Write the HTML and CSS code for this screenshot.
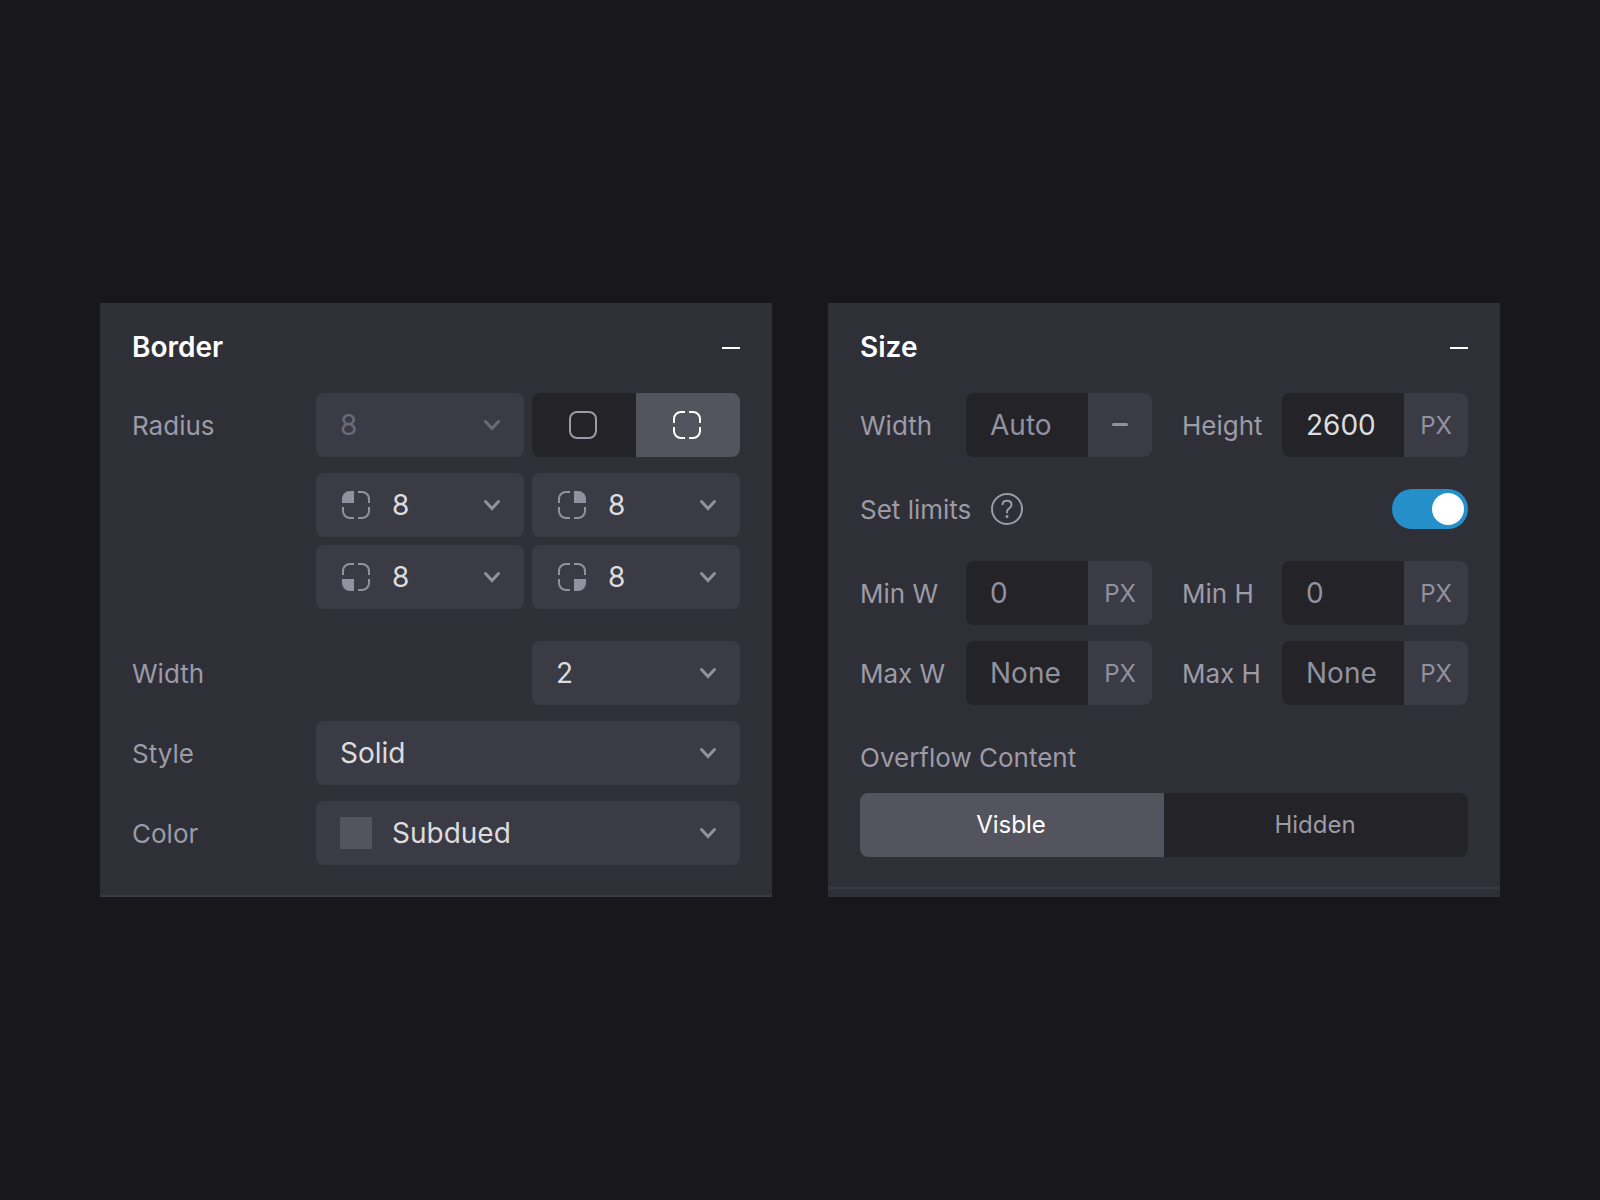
FILE: index.html
```html
<!DOCTYPE html>
<html lang="en">
<head>
    <meta charset="UTF-8">
    <meta name="viewport" content="width=device-width, initial-scale=1.0">
    <title>Border and Size</title>
    <link rel="stylesheet" href="styles.css">
</head>
<body>
    <!-- Shared icon shapes -->
    <svg class="icon-defs" aria-hidden="true">
        <symbol id="chevron" viewBox="0 0 16 16">
            <path d="M1.5 4.5L8 11.5L14.5 4.5" fill="none" stroke="currentColor" stroke-width="3" stroke-linecap="round"/>
        </symbol>
        <symbol id="corner-line" viewBox="0 0 12 12">
            <path d="M1 12V8A7 7 0 0 1 8 1H12" fill="none" stroke="currentColor" stroke-width="2"/>
        </symbol>
        <symbol id="corner-fill" viewBox="0 0 12 12">
            <path d="M0 12V8A8 8 0 0 1 8 0H12V12Z" fill="currentColor"/>
        </symbol>
        <symbol id="collapse" viewBox="0 0 18 18">
            <path d="M0 9H18" stroke="currentColor" stroke-width="2"/>
        </symbol>
    </svg>

    <main class="panels">
        <section class="panel">
            <div class="section">
                <header class="section-header">
                    <h2>Border</h2>
                    <button type="button" class="collapse" aria-label="Collapse Border"><svg><use href="#collapse"/></svg></button>
                </header>

                <div class="border-grid">
                    <label for="radius">Radius</label>
                    <div class="select disabled">
                        <select id="radius" disabled><option>8</option></select>
                        <svg class="chevron"><use href="#chevron"/></svg>
                    </div>
                    <div class="segmented">
                        <button type="button" aria-label="Same radius" aria-pressed="false">
                            <svg width="28" height="28" viewBox="0 0 28 28"><rect x="1" y="1" width="26" height="26" rx="7" fill="none" stroke="currentColor" stroke-width="2"/></svg>
                        </button>
                        <button type="button" class="active" aria-label="Individual radius" aria-pressed="true">
                            <svg width="28" height="28" viewBox="0 0 28 28">
                                <use href="#corner-line" width="12" height="12"/>
                                <use href="#corner-line" width="12" height="12" transform="translate(28 0) rotate(90)"/>
                                <use href="#corner-line" width="12" height="12" transform="translate(28 28) rotate(180)"/>
                                <use href="#corner-line" width="12" height="12" transform="translate(0 28) rotate(270)"/>
                            </svg>
                        </button>
                    </div>

                    <div class="corners">
                        <div class="select has-icon">
                            <svg class="corner-icon" viewBox="0 0 28 28">
                                <use href="#corner-fill" width="12" height="12"/>
                                <use href="#corner-line" width="12" height="12" transform="translate(28 0) rotate(90)"/>
                                <use href="#corner-line" width="12" height="12" transform="translate(28 28) rotate(180)"/>
                                <use href="#corner-line" width="12" height="12" transform="translate(0 28) rotate(270)"/>
                            </svg>
                            <select aria-label="Top left radius"><option>8</option></select>
                            <svg class="chevron"><use href="#chevron"/></svg>
                        </div>
                        <div class="select has-icon">
                            <svg class="corner-icon" viewBox="0 0 28 28">
                                <use href="#corner-line" width="12" height="12"/>
                                <use href="#corner-fill" width="12" height="12" transform="translate(28 0) rotate(90)"/>
                                <use href="#corner-line" width="12" height="12" transform="translate(28 28) rotate(180)"/>
                                <use href="#corner-line" width="12" height="12" transform="translate(0 28) rotate(270)"/>
                            </svg>
                            <select aria-label="Top right radius"><option>8</option></select>
                            <svg class="chevron"><use href="#chevron"/></svg>
                        </div>
                        <div class="select has-icon">
                            <svg class="corner-icon" viewBox="0 0 28 28">
                                <use href="#corner-line" width="12" height="12"/>
                                <use href="#corner-line" width="12" height="12" transform="translate(28 0) rotate(90)"/>
                                <use href="#corner-line" width="12" height="12" transform="translate(28 28) rotate(180)"/>
                                <use href="#corner-fill" width="12" height="12" transform="translate(0 28) rotate(270)"/>
                            </svg>
                            <select aria-label="Bottom left radius"><option>8</option></select>
                            <svg class="chevron"><use href="#chevron"/></svg>
                        </div>
                        <div class="select has-icon">
                            <svg class="corner-icon" viewBox="0 0 28 28">
                                <use href="#corner-line" width="12" height="12"/>
                                <use href="#corner-line" width="12" height="12" transform="translate(28 0) rotate(90)"/>
                                <use href="#corner-fill" width="12" height="12" transform="translate(28 28) rotate(180)"/>
                                <use href="#corner-line" width="12" height="12" transform="translate(0 28) rotate(270)"/>
                            </svg>
                            <select aria-label="Bottom right radius"><option>8</option></select>
                            <svg class="chevron"><use href="#chevron"/></svg>
                        </div>
                    </div>

                    <label for="border-width">Width</label>
                    <div class="select last-column">
                        <select id="border-width"><option>2</option></select>
                        <svg class="chevron"><use href="#chevron"/></svg>
                    </div>

                    <label for="border-style">Style</label>
                    <div class="select wide">
                        <select id="border-style"><option>Solid</option></select>
                        <svg class="chevron"><use href="#chevron"/></svg>
                    </div>

                    <label for="border-color">Color</label>
                    <div class="select wide has-icon">
                        <span class="swatch"></span>
                        <select id="border-color"><option>Subdued</option></select>
                        <svg class="chevron"><use href="#chevron"/></svg>
                    </div>
                </div>
            </div>
        </section>

        <section class="panel">
            <div class="section">
                <header class="section-header">
                    <h2>Size</h2>
                    <button type="button" class="collapse" aria-label="Collapse Size"><svg><use href="#collapse"/></svg></button>
                </header>

                <div class="size-grid">
                    <label for="width">Width</label>
                    <div class="field">
                        <input type="text" id="width" placeholder="Auto">
                        <button type="button" aria-label="No unit">
                            <svg width="16" height="4" viewBox="0 0 16 4"><path d="M1.5 1.5H14.5" stroke="currentColor" stroke-width="3" stroke-linecap="round"/></svg>
                        </button>
                    </div>
                    <label for="height">Height</label>
                    <div class="field">
                        <input type="text" id="height" value="2600">
                        <button type="button">PX</button>
                    </div>
                </div>

                <div class="limits">
                    <label for="limits">Set limits</label>
                    <button type="button" class="help" aria-label="About limits">
                        <svg width="32" height="32" viewBox="0 0 32 32" fill="none" stroke="currentColor" stroke-width="2">
                            <circle cx="16" cy="16" r="15"/>
                            <path d="M11.5 12C11.5 9.3 13.3 7.7 16 7.7C18.7 7.7 20.5 9.3 20.5 11.7C20.5 13.5 19.6 14.5 18.2 15.4C16.7 16.4 16 17.2 16 18.9V20.2"/>
                            <circle cx="16" cy="23.5" r="1.5" fill="currentColor" stroke="none"/>
                        </svg>
                    </button>
                    <input type="checkbox" id="limits" class="toggle" role="switch" checked>
                </div>

                <div class="size-grid">
                    <label for="min-w">Min W</label>
                    <div class="field">
                        <input type="text" id="min-w" placeholder="0">
                        <button type="button">PX</button>
                    </div>
                    <label for="min-h">Min H</label>
                    <div class="field">
                        <input type="text" id="min-h" placeholder="0">
                        <button type="button">PX</button>
                    </div>
                    <label for="max-w">Max W</label>
                    <div class="field">
                        <input type="text" id="max-w" placeholder="None">
                        <button type="button">PX</button>
                    </div>
                    <label for="max-h">Max H</label>
                    <div class="field">
                        <input type="text" id="max-h" placeholder="None">
                        <button type="button">PX</button>
                    </div>
                </div>

                <p class="overflow-label" id="overflow-label">Overflow Content</p>
                <div class="segmented" role="group" aria-labelledby="overflow-label">
                    <button type="button" class="active" aria-pressed="true">Visble</button>
                    <button type="button" aria-pressed="false">Hidden</button>
                </div>
            </div>
        </section>
    </main>
</body>
</html>
```
FILE: styles.css
```css
* {
    box-sizing: border-box;
}

body {
    margin: 0;
    min-height: 100vh;
    display: flex;
    align-items: center;
    background: #18171b;
    color: #9c9ba6;
    font-family: Inter, sans-serif;
    font-size: 26px;
}

button, input, select {
    margin: 0;
    padding: 0;
    border: none;
    background: none;
    color: inherit;
    font-family: inherit;
}

button, select {
    cursor: pointer;
}

svg {
    display: block;
}

.icon-defs {
    position: absolute;
    width: 0;
    height: 0;
}

.panels {
    flex: 1;
    display: grid;
    grid-template-columns: 1fr 1fr;
    gap: 56px;
    padding: 0 100px;
}

.panel {
    background: #2f2f38;
}

.section {
    padding: 0 32px 30px;
    border-bottom: 2px solid #3b3b45;
}

.section-header {
    display: flex;
    justify-content: space-between;
    align-items: center;
    height: 90px;
    color: #fff;
}

h2 {
    margin: 0;
    padding-bottom: 2px;
    font-size: 28px;
    font-weight: 600;
}

.collapse svg {
    width: 18px;
    height: 18px;
}

/* Border */
.border-grid {
    display: grid;
    grid-template-columns: 176px 1fr 1fr;
    gap: 16px 8px;
    align-items: center;
}

.corners {
    grid-column: 2 / 4;
    display: grid;
    grid-template-columns: 1fr 1fr;
    gap: 8px;
    margin-bottom: 16px;
}

.last-column {
    grid-column: 3;
}

.wide {
    grid-column: 2 / 4;
}

.select {
    position: relative;
}

.select select {
    display: block;
    width: 100%;
    height: 64px;
    padding: 0 48px 0 24px;
    border-radius: 8px;
    background: #3b3b45;
    color: #dddcdf;
    font-size: 28px;
    appearance: none;
}

.select.has-icon select {
    padding-left: 76px;
}

.select select:disabled {
    opacity: 1;
    color: #6b6a77;
}

.chevron {
    position: absolute;
    top: 24px;
    right: 24px;
    width: 16px;
    height: 16px;
    color: #9291a0;
    pointer-events: none;
}

.disabled .chevron {
    color: #6b6a77;
}

.corner-icon {
    position: absolute;
    top: 18px;
    left: 26px;
    width: 28px;
    height: 28px;
    color: #9291a0;
    pointer-events: none;
}

.swatch {
    position: absolute;
    top: 16px;
    left: 24px;
    width: 32px;
    height: 32px;
    background: #54545e;
    pointer-events: none;
}

.segmented {
    display: flex;
    height: 64px;
    border-radius: 8px;
    overflow: hidden;
    background: #232328;
}

.segmented button {
    flex: 1;
    display: flex;
    justify-content: center;
    align-items: center;
    padding-right: 2px;
    font-size: 24px;
    line-height: 28px;
}

.segmented .active {
    background: #54545e;
    color: #fff;
}

/* Size */
.size-grid {
    display: grid;
    grid-template-columns: 106px 1fr 130px 1fr;
    row-gap: 16px;
    align-items: center;
}

.size-grid label:nth-of-type(even) {
    padding-left: 30px;
}

.field {
    display: flex;
    height: 64px;
    border-radius: 8px;
    overflow: hidden;
    background: #232328;
}

.field input {
    flex: 1;
    min-width: 0;
    padding-left: 24px;
    color: #dddcdf;
    font-size: 28px;
}

.field input::placeholder {
    color: #9291a0;
    opacity: 1;
}

.field button {
    display: flex;
    justify-content: center;
    align-items: center;
    width: 64px;
    background: #3b3b45;
    color: #9291a0;
    font-size: 24px;
}

.limits {
    display: flex;
    align-items: center;
    gap: 20px;
    height: 40px;
    margin: 32px 0;
}

.toggle {
    width: 76px;
    height: 40px;
    margin-left: auto;
    padding: 4px;
    border-radius: 20px;
    background: #54545e;
    appearance: none;
    cursor: pointer;
}

.toggle::before {
    content: "";
    display: block;
    width: 32px;
    height: 32px;
    border-radius: 50%;
    background: #fff;
}

.toggle:checked {
    background: #248fc9;
}

.toggle:checked::before {
    margin-left: auto;
}

.overflow-label {
    margin: 32px 0 14px;
    line-height: 42px;
}
```
